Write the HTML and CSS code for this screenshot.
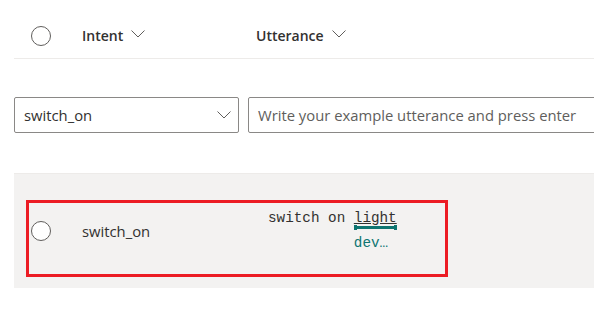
FILE: index.html
```html
<!DOCTYPE html>
<html>
<head>
<meta charset="utf-8">
<link rel="stylesheet" href="styles.css">
</head>
<body>
<div class="page">
  <div class="grid header">
    <span class="check"></span>
    <div class="col-title">Intent
      <svg class="chev" width="14" height="8" viewBox="0 0 14 8"><path d="M0.5 0.5 L7 7 L13.5 0.5" fill="none" stroke="#605e5c" stroke-width="1"/></svg>
    </div>
    <div class="col-title">Utterance
      <svg class="chev" width="14" height="8" viewBox="0 0 14 8"><path d="M0.5 0.5 L7 7 L13.5 0.5" fill="none" stroke="#605e5c" stroke-width="1"/></svg>
    </div>
  </div>

  <div class="entry">
    <div class="dropdown">
      <span>switch_on</span>
      <svg class="dd-chev" width="14" height="8" viewBox="0 0 14 8"><path d="M0.5 0.5 L7 7 L13.5 0.5" fill="none" stroke="#605e5c" stroke-width="1"/></svg>
    </div>
    <div class="input">Write your example utterance and press enter</div>
  </div>

  <div class="grid row">
    <span class="check"></span>
    <div class="cell">switch_on</div>
    <div class="utt">
      <span class="plain">switch on </span><span class="token"><span class="word">light</span><span class="bar"></span><span class="label">dev…</span></span>
    </div>
    <div class="highlight"></div>
  </div>
</div>
</body>
</html>
```

FILE: styles.css
```css
html, body {
  margin: 0;
  padding: 0;
  background: #ffffff;
  overflow: hidden;
}
body {
  font-family: "Open Sans", "Noto Sans", sans-serif;
  color: #323130;
  font-size: 14.8px;
}
.page {
  padding-left: 14px;
  width: 580px;
  overflow: hidden;
}
.grid {
  display: grid;
  grid-template-columns: 20px 143px 1fr;
  column-gap: 31px;
  align-items: center;
  padding-left: 17px;
}
.header {
  padding-top: 13px;
  height: 45px;
  border-bottom: 1px solid #edebe9;
}
.check {
  width: 18px;
  height: 18px;
  border: 1px solid #605e5c;
  border-radius: 50%;
  background: #fff;
}
.col-title {
  font-weight: 600;
  font-size: 14px;
  display: flex;
  align-items: center;
  gap: 8px;
  color: #323130;
}
.chev {
  margin-top: -3px;
}
.entry {
  display: flex;
  gap: 9px;
  margin-top: 38px;
}
.dropdown {
  box-sizing: border-box;
  flex: none;
  width: 225px;
  height: 36px;
  border: 1px solid #8a8886;
  border-radius: 2px;
  display: flex;
  align-items: center;
  justify-content: space-between;
  padding: 0 7px 0 9px;
  color: #323130;
}
.input {
  box-sizing: border-box;
  flex: none;
  width: 360px;
  height: 36px;
  border: 1px solid #8a8886;
  border-radius: 2px;
  display: flex;
  align-items: center;
  padding-left: 9px;
  color: #605e5c;
  white-space: nowrap;
}
.row {
  position: relative;
  margin-top: 40px;
  height: 115px;
  background: #f3f2f1;
  border-top: 1px solid #edebe9;
  box-sizing: border-box;
}
.cell {
  color: #323130;
}
.utt {
  padding-left: 12px;
  font-family: "Liberation Mono", "DejaVu Sans Mono", monospace;
  font-size: 14.3px;
  line-height: 17px;
  color: #323130;
  display: flex;
  align-items: flex-start;
  white-space: pre;
  margin-top: -1px;
}
.token {
  display: inline-flex;
  flex-direction: column;
  align-items: flex-start;
}
.word {
  text-decoration: underline;
  text-underline-offset: 1px;
}
.bar {
  position: relative;
  width: 43px;
  height: 3px;
  background: #0e7571;
  margin-top: -1px;
}
.bar::before, .bar::after {
  content: "";
  position: absolute;
  top: -1px;
  width: 3px;
  height: 5px;
  background: #0e7571;
}
.bar::before { left: 0; }
.bar::after { right: 0; }
.label {
  color: #0e7571;
  margin-top: 6px;
}
.highlight {
  position: absolute;
  left: 12px;
  top: 26px;
  width: 416px;
  height: 71px;
  border: 3px solid #ec1c24;
  pointer-events: none;
}
```
